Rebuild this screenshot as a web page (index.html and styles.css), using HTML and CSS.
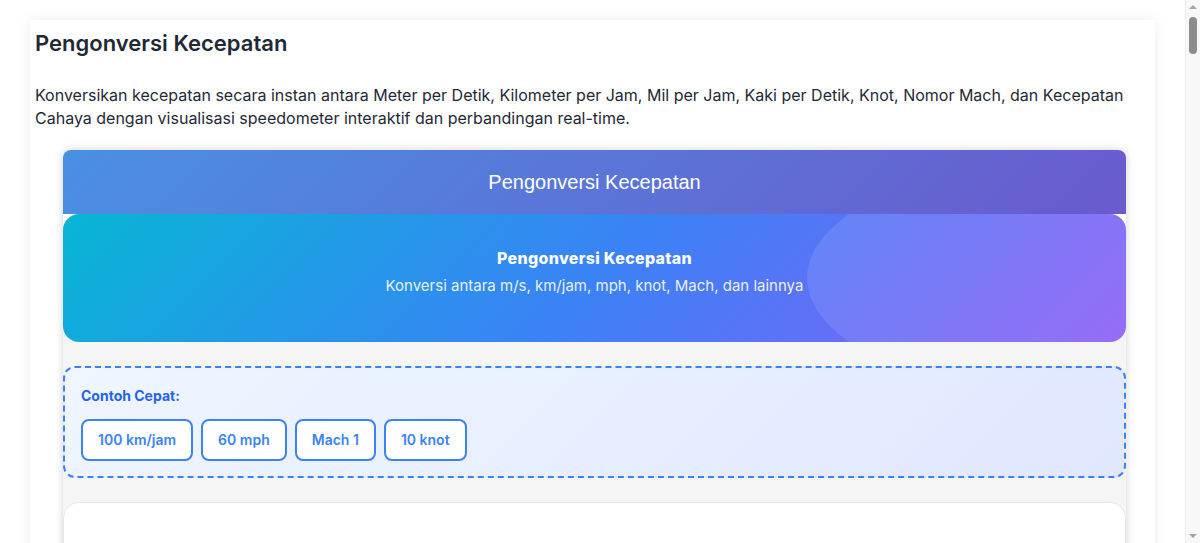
FILE: index.html
```html
<!DOCTYPE html>
<html lang="id">
<head>
    <meta charset="UTF-8">
    <meta name="viewport" content="width=device-width, initial-scale=1.0">
    <title>Pengonversi Kecepatan</title>
    <link rel="stylesheet" href="styles.css">
</head>
<body>
<main class="page">
    <h1 class="page-title">Pengonversi Kecepatan</h1>
    <p class="page-intro">Konversikan kecepatan secara instan antara Meter per Detik, Kilometer per Jam, Mil per Jam, Kaki per Detik, Knot, Nomor Mach, dan Kecepatan Cahaya dengan visualisasi speedometer interaktif dan perbandingan real-time.</p>

    <section class="tool">
        <div class="tool-header">Pengonversi Kecepatan</div>

        <div class="tool-body">
            <div class="hero">
                <h2 class="hero-title">Pengonversi Kecepatan</h2>
                <p class="hero-sub">Konversi antara m/s, km/jam, mph, knot, Mach, dan lainnya</p>
            </div>

            <div class="quick">
                <div class="quick-label">Contoh Cepat:</div>
                <div class="quick-list">
                    <button class="quick-btn">100 km/jam</button>
                    <button class="quick-btn">60 mph</button>
                    <button class="quick-btn">Mach 1</button>
                    <button class="quick-btn">10 knot</button>
                </div>
            </div>

            <div class="panel"></div>
        </div>
    </section>
</main>

<!-- scrollbar drawn over the right edge -->
<div class="scrollbar">
    <span class="scroll-arrow up"></span>
    <span class="scroll-thumb"></span>
    <span class="scroll-arrow down"></span>
</div>
</body>
</html>
```

FILE: styles.css
```css
/* Global */
html {
    overflow: hidden;
}

body {
    margin: 0;
    padding-right: 15px;
    height: 100vh;
    overflow-y: auto;
    font-family: 'Inter', 'Noto Sans', sans-serif;
    background-color: #fff;
    color: #1f2937;
}

.page {
    width: 1115px;
    margin: 20px auto 40px;
    padding: 5px 5px 40px;
    background-color: #fff;
    box-shadow: 0 0 12px rgba(0, 0, 0, 0.08);
}

.page-title {
    margin: 4px 0 0;
    font-size: 22px;
    font-weight: 600;
    line-height: 28px;
    color: #1f2937;
}

.page-intro {
    margin: 27px 0 0;
    font-size: 16px;
    line-height: 23px;
}

/* Tool card */
.tool {
    margin: 20px 24px 0 28px;
    border-radius: 8px;
    overflow: hidden;
    background-color: #f5f5f5;
    box-shadow: 0 0 8px rgba(0, 0, 0, 0.18);
}

.tool-header {
    height: 64px;
    line-height: 64px;
    text-align: center;
    font-family: 'Liberation Sans', Arial, sans-serif;
    font-size: 20px;
    color: #fff;
    background: linear-gradient(135deg, #4a90e2 0%, #6a5acd 100%);
}

.tool-body {
    padding: 0 0 30px;
    background: linear-gradient(#fff 0, #fff 20px, #f5f5f5 20px);
}

.hero {
    position: relative;
    overflow: hidden;
    padding: 32px 24px 44px;
    border-radius: 16px;
    text-align: center;
    color: #fff;
    background: linear-gradient(135deg, #06b6d4 0%, #3b82f6 50%, #8b5cf6 100%);
}

.hero::before {
    content: '';
    position: absolute;
    top: -50%;
    right: -29%;
    width: 59%;
    height: 200%;
    border-radius: 50%;
    background-color: rgba(255, 255, 255, 0.1);
}

.hero-title {
    position: relative;
    margin: 0 0 4px;
    font-family: 'Inter', sans-serif;
    font-size: 16px;
    font-weight: 800;
    letter-spacing: 0.3px;
    line-height: 24px;
}

.hero-sub {
    position: relative;
    margin: 0;
    font-size: 15px;
    line-height: 24px;
    color: rgba(255, 255, 255, 0.9);
}

/* Quick examples */
.quick {
    margin-top: 24px;
    padding: 18px 16px 15px;
    border: 2px dashed #3b82f6;
    border-radius: 12px;
    background: linear-gradient(135deg, #eff6ff 0%, #e0e7ff 100%);
}

.quick-label {
    font-size: 14px;
    font-weight: 700;
    line-height: 20px;
    color: #2563eb;
    margin-bottom: 13px;
}

.quick-list {
    display: flex;
    gap: 8px;
}

.quick-btn {
    padding: 10px 15px;
    border: 2px solid #3b82f6;
    border-radius: 8px;
    background-color: #fff;
    font-family: 'Inter', sans-serif;
    font-size: 14px;
    font-weight: 600;
    line-height: 18px;
    color: #3b82f6;
    cursor: pointer;
}

/* Main panel */
.panel {
    margin-top: 24px;
    height: 420px;
    border: 1px solid #e5e7eb;
    border-radius: 16px;
    background-color: #fff;
}

/* Scrollbar */
.scrollbar {
    position: fixed;
    top: 0;
    right: 0;
    width: 15px;
    height: 100%;
    background-color: #f8f8f8;
    border-left: 1px solid #efefef;
    box-sizing: border-box;
}

.scroll-thumb {
    position: absolute;
    top: 17px;
    left: 3px;
    width: 8px;
    height: 37px;
    border-radius: 4px;
    background-color: #8c8c8c;
}

.scroll-arrow {
    position: absolute;
    left: 3px;
    width: 0;
    height: 0;
    border-left: 4px solid transparent;
    border-right: 4px solid transparent;
}

.scroll-arrow.up {
    top: 5px;
    border-bottom: 4px solid #a3a3a3;
}

.scroll-arrow.down {
    bottom: 5px;
    border-top: 4px solid #a3a3a3;
}
```
